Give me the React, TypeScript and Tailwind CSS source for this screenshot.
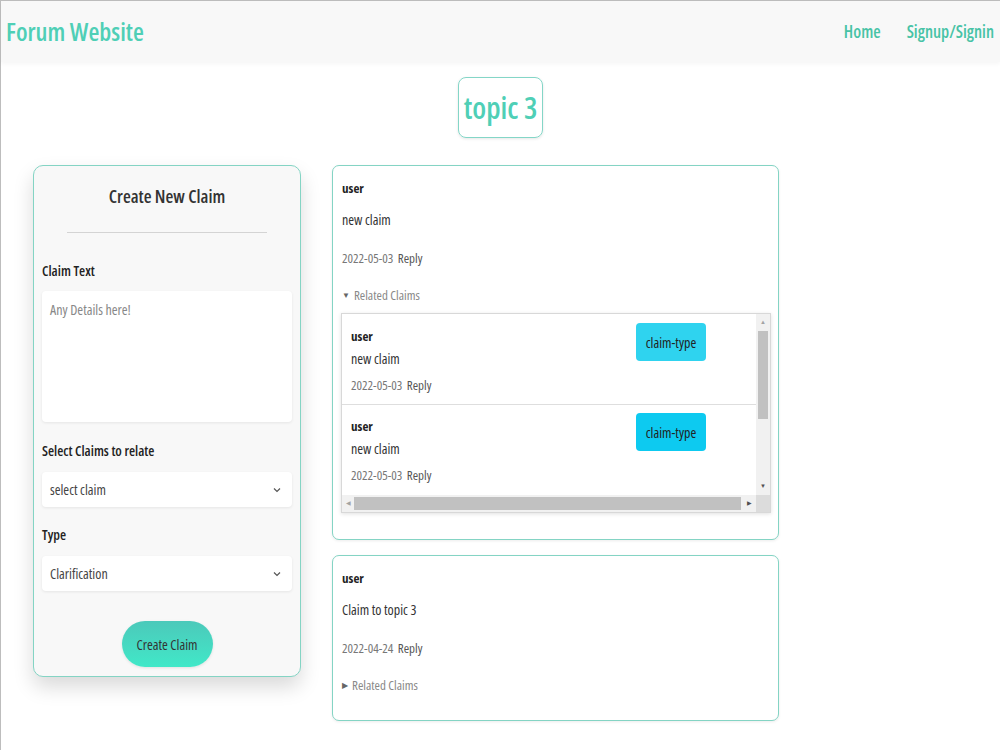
import React from "react";

function Chevron() {
  return (
    <svg width="10" height="10" viewBox="0 0 10 10" className="shrink-0">
      <path d="M2 3.5 L5 6.5 L8 3.5" fill="none" stroke="#555" strokeWidth="1.2" />
    </svg>
  );
}

function Select({ label }: { label: string }) {
  return (
    <div className="h-[35px] bg-white rounded-[4px] shadow-[0_1px_3px_rgba(0,0,0,0.08)] flex items-center justify-between pl-[8px] pr-[10px] text-[14px] text-[#444]">
      <span>{label}</span>
      <Chevron />
    </div>
  );
}

function Badge({ color }: { color: string }) {
  return (
    <div
      className={`w-[70px] h-[38px] rounded-[4px] flex items-center justify-center text-[14px] text-[#222] ${color}`}
    >
      claim-type
    </div>
  );
}

function InnerItem({ color, last }: { color: string; last?: boolean }) {
  return (
    <div className={`flex pl-[9px] ${last ? "pt-[12px]" : "pt-[9px] pb-[10px] border-b border-[#dedede]"}`}>
      <div className={`w-[285px] flex flex-col ${last ? "" : "pt-[4px]"}`}>
        <div className="text-[13px] font-bold leading-[18px] text-[#222]">user</div>
        <div className="text-[14px] leading-[18px] mt-[5px] text-[#333]">new claim</div>
        <div className="text-[13px] leading-[18px] mt-[8px] text-[#777]">
          2022-05-03 <span className="text-[#555] ml-[2px]">Reply</span>
        </div>
      </div>
      <div className={last ? "-mt-[4px]" : ""}>
        <Badge color={color} />
      </div>
    </div>
  );
}

function ScrollBox() {
  return (
    <div className="h-[200px] border border-[#d8d8d8] shadow-[0_1px_4px_rgba(0,0,0,0.12)] bg-white grid grid-cols-[1fr_14px] grid-rows-[1fr_17px]">
      <div className="overflow-hidden">
        <InnerItem color="bg-[#2fd3ef]" />
        <InnerItem color="bg-[#0dcaf0]" last />
      </div>
      <div className="bg-[#f1f1f1] flex flex-col items-center">
        <div className="h-[17px] flex items-center justify-center text-[6px] text-[#a3a3a3]">▲</div>
        <div className="w-[10px] h-[88px] bg-[#c1c1c1]" />
        <div className="flex-1" />
        <div className="h-[17px] flex items-center justify-center text-[6px] text-[#505050]">▼</div>
      </div>
      <div className="bg-[#f1f1f1] flex items-center">
        <div className="w-[12px] flex items-center justify-center text-[6px] text-[#a3a3a3]">◀</div>
        <div className="flex-1 h-[13px] bg-[#c1c1c1] mr-[1px]" />
        <div className="w-[14px] flex items-center justify-center text-[6px] text-[#505050]">▶</div>
      </div>
      <div className="bg-[#dcdcdc]" />
    </div>
  );
}

function Meta({ date }: { date: string }) {
  return (
    <div className="text-[13px] leading-[18px] text-[#777]">
      {date} <span className="text-[#555] ml-[2px]">Reply</span>
    </div>
  );
}

export default function App() {
  return (
    <div className="min-h-[750px] bg-white border-l border-t border-[#bdbdbd] font-['Open_Sans','Noto_Sans',sans-serif] [font-stretch:75%] text-[#222]">
      <nav className="h-[61px] bg-[#f8f8f8] shadow-[0_2px_4px_rgba(0,0,0,0.04)] flex items-center justify-between pl-[5px] pr-[6px]">
        <div className="text-[25px] font-semibold text-[#4fcfb6]">Forum Website</div>
        <div className="flex gap-[26px] text-[17px] font-semibold text-[#48c3a6]">
          <span>Home</span>
          <span>Signup/Signin</span>
        </div>
      </nav>

      <div className="flex justify-center mt-[15px]">
        <div className="h-[61px] px-[5px] border border-[#84d6c7] rounded-[8px] shadow-[0_1px_3px_rgba(0,0,0,0.1)] flex items-center text-[30px] font-semibold text-[#4fcfb6]">
          topic 3
        </div>
      </div>

      <div className="flex mt-[27px] pl-[32px] gap-[31px] items-start">
        <div className="w-[268px] h-[512px] bg-[#f8f8f8] border border-[#84d4c4] rounded-[10px] shadow-[0_10px_20px_rgba(0,0,0,0.15)] px-[8px] pt-[19px]">
          <div className="text-center text-[18px] font-semibold leading-[22px] text-[#333]">Create New Claim</div>
          <div className="w-[200px] mx-auto mt-[25px] border-t border-[#d4d4d4]" />
          <div className="mt-[29px] text-[14px] font-semibold leading-[18px] text-[#222]">Claim Text</div>
          <div className="mt-[11px] h-[131px] bg-white rounded-[4px] shadow-[0_1px_3px_rgba(0,0,0,0.08)] px-[8px] pt-[8px] text-[14px] text-[#888]">
            Any Details here!
          </div>
          <div className="mt-[20px] text-[14px] font-semibold leading-[18px] text-[#222]">Select Claims to relate</div>
          <div className="mt-[12px]">
            <Select label="select claim" />
          </div>
          <div className="mt-[19px] text-[14px] font-semibold leading-[18px] text-[#222]">Type</div>
          <div className="mt-[12px]">
            <Select label="Clarification" />
          </div>
          <div className="flex justify-center mt-[30px]">
            <div className="w-[91px] h-[46px] rounded-full bg-gradient-to-b from-[#4bc9ba] to-[#40e8c8] flex items-center justify-center text-[14px] text-[#333] shadow-[0_1px_3px_rgba(0,0,0,0.1)]">
              Create Claim
            </div>
          </div>
        </div>

        <div className="w-[447px] flex flex-col gap-[15px]">
          <div className="h-[375px] bg-white border border-[#84d4c4] rounded-[7px] shadow-[0_1px_3px_rgba(0,0,0,0.08)] pl-[8px] pr-[7px] pt-[13px]">
            <div className="pl-[1px] text-[13px] font-bold leading-[18px]">user</div>
            <div className="pl-[1px] mt-[14px] text-[14px] leading-[18px] text-[#333]">new claim</div>
            <div className="pl-[1px] mt-[20px]">
              <Meta date="2022-05-03" />
            </div>
            <div className="pl-[1px] mt-[19px] text-[13px] leading-[18px] text-[#888] flex items-center gap-[4px]">
              <span className="text-[8px] text-[#666]">▼</span>
              <span>Related Claims</span>
            </div>
            <div className="mt-[9px]">
              <ScrollBox />
            </div>
          </div>

          <div className="h-[166px] bg-white border border-[#84d4c4] rounded-[7px] shadow-[0_1px_3px_rgba(0,0,0,0.08)] pl-[9px] pt-[13px]">
            <div className="text-[13px] font-bold leading-[18px]">user</div>
            <div className="mt-[14px] text-[14px] leading-[18px] text-[#333]">Claim to topic 3</div>
            <div className="mt-[20px]">
              <Meta date="2022-04-24" />
            </div>
            <div className="mt-[19px] text-[13px] leading-[18px] text-[#888] flex items-center gap-[4px]">
              <span className="text-[8px] text-[#666]">▶</span>
              <span>Related Claims</span>
            </div>
          </div>
        </div>
      </div>
    </div>
  );
}
